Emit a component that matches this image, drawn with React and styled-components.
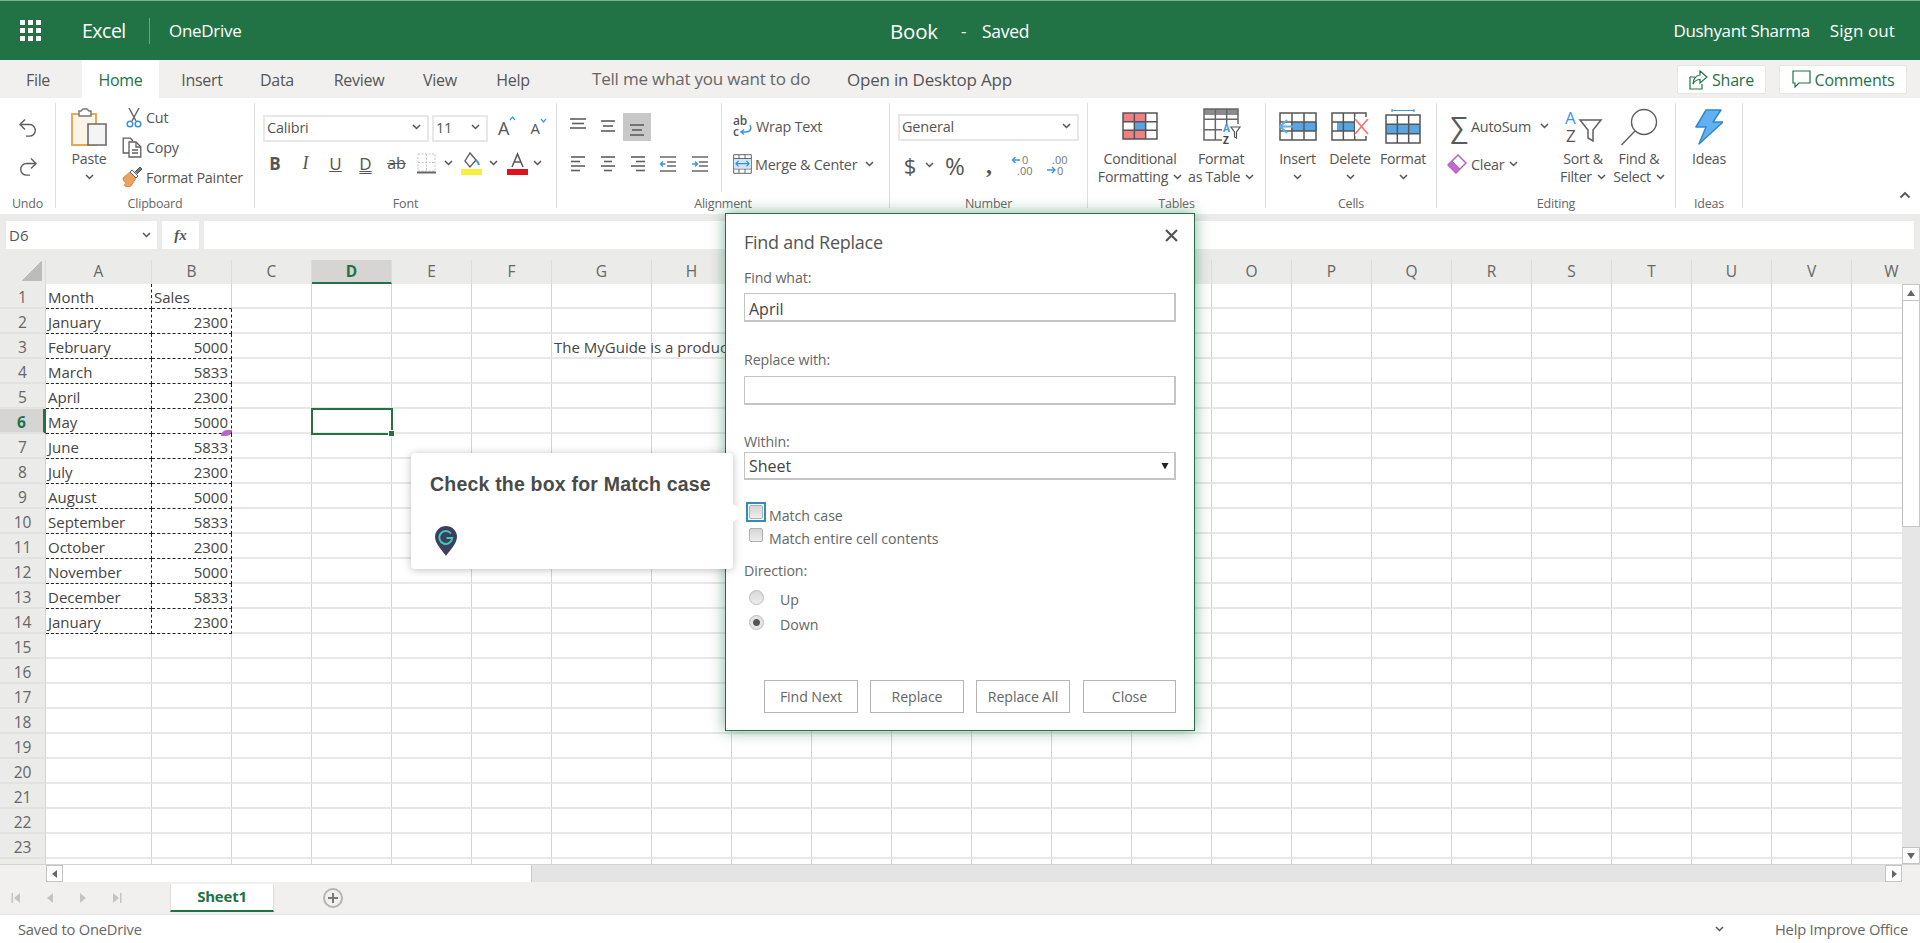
import React from "react";
import styled, { createGlobalStyle } from "styled-components";

const GlobalStyle = createGlobalStyle`
  html, body { margin: 0; padding: 0; width: 1920px; height: 943px; overflow: hidden; background: #fff; }
  body { font-family: "Open Sans", "Noto Sans", sans-serif; color: #555; }
  *, *::before, *::after { box-sizing: border-box; }
`;

const Page = styled.div`
  position: relative; width: 1920px; height: 943px; overflow: hidden;
  display: flex; flex-direction: column; background: #fff;
`;

/* top bar */
const TopBar = styled.header`
  flex: 0 0 60px; display: flex; align-items: center; background: #217346;
  border-top: 1px solid #7fb096; color: #fff; padding-left: 20px;
`;
const Waffle = styled.svg`flex: 0 0 21px; width: 21px; height: 21px; margin-right: 41px;`;
const AppName = styled.span`font-size: 19.5px; width: 67px; letter-spacing: -0.5px;`;
const ProductDivider = styled.span`width: 1px; height: 26px; background: rgba(255,255,255,.35); margin-right: 19px;`;
const OneDriveName = styled.span`font-size: 17px; width: 721px; letter-spacing: -0.3px;`;
const DocName = styled.span`font-size: 20.5px; width: 71px; letter-spacing: -0.2px;`;
const DocDash = styled.span`font-size: 17px; width: 21px;`;
const DocState = styled.span`font-size: 17.5px; letter-spacing: -0.3px;`;
const UserArea = styled.div`margin-left: auto; display: flex; gap: 20px; padding-right: 25px; font-size: 17px; letter-spacing: -0.35px;`;
const SignOut = styled.span`letter-spacing: 0.1px;`;

/* tabs */
const TabRow = styled.nav`
  flex: 0 0 38px; display: flex; align-items: stretch; background: #f1f0ef;
`;
const Tab = styled.div`
  flex: 0 0 ${p => p.$w}px; display: flex; align-items: center; justify-content: center; padding-top: 1px;
  margin-right: ${p => p.$mr || 0}px; font-size: 16px; letter-spacing: -0.3px;
  color: ${p => (p.$active ? "#217346" : "#555")};
  background: ${p => (p.$active ? "#fff" : "transparent")};
`;
const TellMe = styled.div`
  flex: 0 0 255px; display: flex; align-items: center; margin-left: 37px; padding-bottom: 2px;
  font-size: 17px; letter-spacing: -0.2px; color: #666;
`;
const DesktopLink = styled.div`
  display: flex; align-items: center; font-size: 17px; letter-spacing: -0.2px; color: #555; padding-top: 1px;
`;
const TabActions = styled.div`
  margin-left: auto; display: flex; gap: 13px; padding: 5px 13px 4px 0;
`;
const ActionButton = styled.div`
  width: ${p => p.$w}px; display: flex; align-items: center; justify-content: center; gap: 4px;
  background: #fff; border: 1px solid #e6e6e6; border-radius: 2px; color: #217346;
  font-size: 16px; letter-spacing: -0.2px; font-weight: 500;
`;

/* ribbon */
const Ribbon = styled.section`
  flex: 0 0 116px; display: flex; background: #fff; padding: 5px 0 6px; min-height: 0;
`;
const Group = styled.div`
  flex: 0 0 ${p => p.$w}px; display: flex; flex-direction: column; min-height: 0;
  border-right: 1px solid #dedede;
`;
const GroupBody = styled.div`
  flex: 1; display: flex; min-height: 0; padding-left: ${p => p.$pl || 0}px;
`;
const GroupLabel = styled.div`
  flex: 0 0 14px; min-height: 0; line-height: 20px; text-align: center; font-size: 12.5px; color: #666; letter-spacing: -0.2px;
`;
const Stack = styled.div`
  display: flex; flex-direction: column; flex: 0 0 ${p => p.$w ? p.$w + "px" : "auto"};
  padding-top: ${p => p.$pt || 0}px; gap: ${p => p.$gap || 0}px; margin-top: ${p => p.$mt || 0}px;
  align-items: ${p => p.$center ? "center" : "stretch"};
  border-right: ${p => p.$divider ? "1px solid #dedede" : "0"};
  height: ${p => p.$h ? p.$h + "px" : "auto"};
`;
const TallButton = styled.div`
  flex: 0 0 ${p => p.$w}px; display: flex; flex-direction: column; align-items: center;
  font-size: 14.2px; letter-spacing: -0.25px; color: #555; line-height: 18px; white-space: nowrap;
`;
const TallIcon = styled.div`
  height: 47px; flex-shrink: 0; display: flex; align-items: center; justify-content: center;
`;
const LabelLine = styled.div`
  height: 18px; flex-shrink: 0; display: flex; align-items: center; justify-content: center; gap: 5px;
`;
const CmdRow = styled.div`
  display: flex; flex-shrink: 0; align-items: center; height: ${p => p.$h || 30}px; padding-left: ${p => p.$pl || 0}px;
  font-size: 14.4px; letter-spacing: -0.25px; color: #555; white-space: nowrap;
  margin-top: ${p => p.$mt || 0}px;
`;
const CmdIcon = styled.div`
  flex: 0 0 ${p => p.$w}px; display: flex; align-items: center; justify-content: ${p => (p.$start ? "flex-start" : "center")};
`;
const CmdChevron = styled.span`margin-left: ${p => p.$ml || 8}px; display: inline-flex;`;
const SumGlyph = styled.span`font-size: 28px; line-height: 1; color: #5a5a5a;`;
const ToolRow = styled.div`
  display: flex; flex-shrink: 0; align-items: center; height: 28px; margin-top: ${p => p.$mt || 0}px;
  margin-left: ${p => p.$ml || 0}px;
`;
const ToolCell = styled.div`
  flex: 0 0 ${p => p.$w}px; height: 28px; display: flex; align-items: center; justify-content: center;
  margin-right: ${p => p.$mr || 0}px; color: #555;
  background: ${p => (p.$on ? "#c8c8c8" : "transparent")};
  font-size: ${p => p.$fs || 15}px; font-weight: ${p => p.$bold ? 700 : 400};
  font-style: ${p => p.$italic ? "italic" : "normal"};
  text-decoration: ${p => p.$line || "none"};
  font-family: ${p => p.$serif ? '"Liberation Serif", serif' : "inherit"};
`;
const Combo = styled.div`
  flex: 0 0 ${p => p.$w}px; height: 27px; display: flex; align-items: center; justify-content: space-between;
  border: 2px solid #e8e8e8; padding: 0 6px 2px 2px; margin-right: ${p => p.$mr || 0}px;
  font-size: 14.5px; letter-spacing: -0.2px; color: #555;
`;
const GrowA = styled.div`
  flex: 0 0 ${p => p.$w}px; margin-left: ${p => p.$ml || 0}px; font-size: ${p => p.$fs}px; color: #555;
  display: flex; align-items: flex-start; justify-content: center; gap: 0;
`;
const IconSvg = styled.svg`overflow: visible; display: block;`;
const CollapseButton = styled.div`margin-left: auto; align-self: flex-end; padding: 0 9px 4px 0;`;

/* formula bar */
const FormulaBar = styled.div`
  flex: 0 0 46px; display: flex; gap: 5px; padding: 7px 6px 11px; background: #ebebea;
`;
const NameBox = styled.div`
  flex: 0 0 151px; display: flex; align-items: center; justify-content: space-between;
  background: #fff; padding: 0 6px 0 3px; font-size: 15px; color: #555;
`;
const FxBox = styled.div`
  flex: 0 0 37px; background: #fff; display: flex; align-items: center; justify-content: center;
  font: italic 700 15px "Liberation Serif", serif; color: #555;
`;
const FormulaInput = styled.div`flex: 1; background: #fff;`;

/* sheet */
const SheetArea = styled.div`flex: 0 0 605px; min-height: 0; display: flex; border-bottom: 1px solid #d4d4d4;`;
const GridBox = styled.div`flex: 1; overflow: hidden; min-width: 0;`;
const HeaderRow = styled.div`display: flex; height: 24px; background: #ebebea;`;
const Corner = styled.div`
  flex: 0 0 46px; position: relative; border-right: 1px solid #dcdcdc;
  &::after {
    content: ""; position: absolute; right: 3px; top: 1px; width: 20px; height: 20px;
    background: linear-gradient(to bottom right, transparent 50%, #bcbcbc 50%);
  }
`;
const ColHead = styled.div`
  flex: 0 0 ${p => p.$w}px; text-align: center; line-height: 23px; font-size: 15.5px;
  color: ${p => (p.$active ? "#217346" : "#666")}; font-weight: ${p => (p.$active ? 700 : 400)};
  background: ${p => (p.$active ? "#d6d5d3" : "transparent")};
  border-right: 1px solid #dcdcdc;
  border-bottom: ${p => (p.$active ? "2px solid #217346" : "0")};
`;
const SheetRow = styled.div`display: flex; height: 25px;`;
const RowHead = styled.div`
  flex: 0 0 46px; text-align: center; line-height: 27px; font-size: 15.5px;
  color: ${p => (p.$active ? "#217346" : "#666")}; font-weight: ${p => (p.$active ? 700 : 400)};
  background: ${p => (p.$active ? "#d6d5d3" : "#ebebea")};
  border-right: ${p => (p.$active ? "3px solid #217346" : "1px solid #d4d4d4")};
  border-bottom: 2px solid #e2e2e2;
`;
const Cell = styled.div`
  flex: 0 0 ${p => p.$w}px; min-width: 0; height: 25px; position: relative; white-space: nowrap;
  line-height: 27px; font-size: 15px; color: #444;
  padding: 0 3px 0 2px; text-align: ${p => (p.$num ? "right" : "left")};
  border-right: ${p => (p.$dashR ? "1px dashed #222" : "1px solid #d4d4d4")};
  border-bottom: ${p => (p.$dashB ? "1px dashed #222" : "2px solid #e8e8e8")};
`;
const SelectionBox = styled.div`
  position: absolute; left: -1px; top: -1px; width: 82px; height: 27px;
  border: 2px solid #217346; z-index: 2;
  &::after {
    content: ""; position: absolute; right: -4px; bottom: -4px; width: 7px; height: 7px;
    background: #217346; border: 1px solid #fff;
  }
`;
const CommentMark = styled.div`
  position: absolute; right: -1px; bottom: -3px; width: 11px; height: 6px;
  background: #bb66c4; border-radius: 6px 0 6px 0; z-index: 2;
`;
const VScroll = styled.div`flex: 0 0 18px; display: flex; flex-direction: column; background: #e6e6e6;`;
const VHead = styled.div`flex: 0 0 24px; background: #ebebea;`;
const ScrollArrow = styled.div`
  flex: 0 0 ${p => p.$size || 17}px; display: flex; align-items: center; justify-content: center;
  background: #fff; border: 1px solid #c4c4c4;
`;
const VThumb = styled.div`flex: 0 0 226px; background: #fff; border-left: 1px solid #bdbdbd; border-right: 1px solid #c8c8c8; border-bottom: 1px solid #c8c8c8;`;
const VTrack = styled.div`flex: 1;`;
const HScrollRow = styled.div`flex: 0 0 17px; display: flex; background: #f1f0ef; padding-left: 46px; padding-right: 18px;`;
const HThumb = styled.div`flex: 0 0 469px; background: #fff; border-right: 1px solid #c8c8c8;`;
const HTrack = styled.div`flex: 1; background: #e4e4e4;`;
const SheetTabs = styled.div`flex: 0 0 33px; display: flex; background: #f1f0ef; border-bottom: 1px solid #e4e4e4;`;
const TabNav = styled.div`flex: 0 0 170px; display: flex; align-items: center; padding-left: 11px; gap: 23.5px;`;
const SheetTab = styled.div`
  flex: 0 0 104px; margin-top: 2px; height: 28px; background: #fff; text-align: center;
  border-bottom: 2px solid #217346; border-left: 1px solid #ddd; border-right: 1px solid #ddd;
  color: #217346; font-weight: 700; font-size: 15px; line-height: 25px; letter-spacing: -0.2px;
`;
const AddSheet = styled.div`
  margin: 6px 0 0 49px; width: 20px; height: 20px; border-radius: 50%; border: 2px solid #b4b4b4;
  display: flex; align-items: center; justify-content: center;
`;
const StatusBar = styled.footer`
  flex: 1; display: flex; align-items: center; padding: 0 12px 0 18px; font-size: 14.7px; color: #666; letter-spacing: -0.2px;
`;
const StatusRight = styled.div`margin-left: auto; display: flex; align-items: center; gap: 51px;`;

/* dialog */
const Dialog = styled.div`
  position: absolute; left: 725px; top: 213px; width: 470px; height: 518px;
  display: flex; flex-direction: column; padding: 0 18px 17px 18px;
  background: #fff; border: 1px solid #217346; z-index: 5;
  box-shadow: 0 0 14px rgba(33,115,70,.55);
`;
const DialogHeader = styled.div`
  flex: 0 0 40px; display: flex; justify-content: space-between; align-items: flex-start; padding-top: 16px;
`;
const DialogTitle = styled.div`font-size: 18px; line-height: 24px; color: #555; letter-spacing: -0.25px;`;
const CloseGlyph = styled.svg`width: 13px; height: 13px; margin: 0 -2px 0 0; position: relative; top: -1px;`;
const FieldLabel = styled.div`
  line-height: 20px; font-size: 14.2px; color: #666; margin-top: ${p => p.$mt}px; letter-spacing: -0.1px;
`;
const TextBox = styled.div`
  height: ${p => p.$h || 29}px; margin-top: ${p => p.$mt || 0}px; border-style: solid; border-width: 1px 2px 2px 1px;
  border-color: #c4c4c4; display: flex; align-items: center; padding: ${p => p.$pt ?? 2}px 4px 0;
  font-size: 16px; color: #444; justify-content: space-between;
`;
const CheckList = styled.div`margin-top: 24px;`;
const CheckRow = styled.div`
  display: flex; align-items: flex-start; height: 23px; font-size: 14.2px; line-height: 23px; color: #666; letter-spacing: -0.05px;
`;
const CheckBox = styled.span`
  position: relative; flex: 0 0 14px; height: 14px; margin: 1px 6px 0 5px; border-radius: 2px; border: 1px solid #b0b0b0;
  background: linear-gradient(#d4d4d4, #eeeeee);
  ${p => p.$focus && `&::after {
    content: ""; position: absolute; left: -4px; top: -4px; width: 20px; height: 20px;
    border: 2.5px solid #2b90b3;
  }`}
`;
const RadioList = styled.div`margin-top: 6px;`;
const RadioRow = styled.div`
  display: flex; align-items: flex-start; height: 25px; font-size: 14.2px; line-height: 25px; color: #666;
`;
const RadioDot = styled.span`
  flex: 0 0 15px; height: 15px; margin: 3px 16px 0 5px; border-radius: 50%; border: 1px solid #bbb;
  background: ${p => (p.$on
    ? "radial-gradient(circle, #555 0 3px, #e4e4e4 4px)"
    : "linear-gradient(#d8d8d8, #eeeeee)")};
`;
const ButtonRow = styled.div`margin-top: auto; display: flex; justify-content: flex-end; gap: 12px;`;
const DialogButton = styled.div`
  flex: 0 0 ${p => p.$w || 94}px; height: 33px; margin-left: ${p => p.$ml || 0}px; border: 1px solid #b4b4b4;
  display: flex; align-items: center; justify-content: center; font-size: 14.2px; color: #666; letter-spacing: -0.1px;
`;

/* tooltip */
const Tip = styled.div`
  position: absolute; left: 411px; top: 453px; width: 322px; height: 116px; z-index: 6;
  background: #fff; border-radius: 4px; padding: 20px 19px 0;
  box-shadow: 0 1px 8px rgba(0,0,0,.25);
  &::after {
    content: ""; position: absolute; right: -12px; top: 51px; width: 12px; height: 18px;
    background: #fff; clip-path: polygon(0 0, 100% 50%, 0 100%);
  }
`;
const TipText = styled.div`
  font: 700 19.5px/22px "Liberation Sans", Arial, sans-serif; color: #4a4a4a; letter-spacing: 0.2px; white-space: nowrap;
`;
const TipPin = styled.svg`display: block; width: 22px; height: 30px; margin: 31px 0 0 5px;`;

const stroke = "#5c5c5c";
const Chevron = ({ c = "#555" }) => (
  <svg width="9" height="6" viewBox="0 0 9 6"><path d="M1 1l3.5 3.5L8 1" fill="none" stroke={c} strokeWidth="1.5" /></svg>
);
const UndoIcon = () => (
  <svg width="20" height="20" viewBox="0 0 20 20" fill="none" stroke={stroke} strokeWidth="1.4"><path d="M7 1.5L2 6.5l5 5" /><path d="M2 6.5h9.5a5.8 5.8 0 0 1 0 11.6H8" /></svg>
);
const RedoIcon = () => (
  <svg width="20" height="20" viewBox="0 0 20 20" fill="none" stroke={stroke} strokeWidth="1.4"><path d="M13 1.5l5 5-5 5" /><path d="M18 6.5H8.5a5.8 5.8 0 0 0 0 11.6H12" /></svg>
);
const PasteIcon = () => (
  <svg width="36" height="38" viewBox="0 0 36 38" fill="none">
    <path d="M1 6h24v31H1z" fill="#fdf4e8" stroke="#e6a65c" strokeWidth="2" />
    <path d="M8 7V3h2l2-2h4l2 2h2v5H8z" fill="#fff" stroke="#777" strokeWidth="1.4" />
    <path d="M17 16h18v21H17z" fill="#f4f4f4" stroke="#6a6a6a" strokeWidth="1.6" />
  </svg>
);
const CutIcon = () => (
  <svg width="16" height="21" viewBox="0 0 16 21" fill="none">
    <path d="M3 1l7 13M13 1L6 14" stroke="#666" strokeWidth="1.5" />
    <circle cx="4" cy="17" r="2.8" stroke="#3d8fd6" strokeWidth="1.5" />
    <circle cx="12" cy="17" r="2.8" stroke="#3d8fd6" strokeWidth="1.5" />
  </svg>
);
const CopyIcon = () => (
  <svg width="20" height="21" viewBox="0 0 20 21" fill="none" stroke="#5f5f5f" strokeWidth="1.3">
    <path d="M7 16H1.2V1.2H8.5L11 4" />
    <path d="M7 5h7l4.8 4.8V20H7z" fill="#fff" />
    <path d="M14 5v5h4.8M10 13h6M10 16h6" />
  </svg>
);
const PainterIcon = () => (
  <svg width="21" height="22" viewBox="0 0 21 22" fill="none">
    <path d="M1 12l7-6 6 6-5 8c-3 1-6 1-7-1 1 0 2-1 2-2-1 0-3-3-3-5z" fill="#eaa35f" stroke="#d88a3f" />
    <path d="M8 6l6 6 2-2-6-6z" fill="#fff" stroke="#666" />
    <path d="M13 6l5-5 2 2-5 5" fill="#777" stroke="#555" />
  </svg>
);
const AlignIcon = ({ lines }) => (
  <svg width="18" height="18" viewBox="0 0 18 18" stroke="#5f5f5f" strokeWidth="1.6">
    {lines.map(([x1, x2, y], i) => <path key={i} d={`M${x1} ${y}H${x2}`} />)}
  </svg>
);
const IndentIcon = ({ flip }) => (
  <svg width="18" height="18" viewBox="0 0 18 18" fill="none" strokeWidth="1.5">
    <path d="M1 2h16M8 7h9M8 11h9M1 16h16" stroke="#6a6a6a" />
    <path d={flip ? "M1 9h5M4 6.5L6.5 9 4 11.5" : "M1.5 9h5M4 6.5L1.5 9 4 11.5"} stroke="#3f97dc" />
  </svg>
);
const BorderIcon = () => (
  <svg width="19" height="21" viewBox="0 0 19 21" fill="none">
    <path d="M1 1h17v17H1zM9.5 1v17M1 9.5h17" stroke="#c4c4c4" strokeDasharray="2 1.5" />
    <path d="M0 19.5h19" stroke="#666" strokeWidth="2" />
  </svg>
);
const FillIcon = () => (
  <svg width="21" height="23" viewBox="0 0 21 23" fill="none">
    <path d="M9 1l6 7-6 7-5-6z" stroke="#5f5f5f" strokeWidth="1.4" />
    <path d="M15 8c2 2 3 4 3 5" stroke="#3f97dc" strokeWidth="2" />
    <rect x="0" y="17" width="21" height="6" fill="#f7ef3a" />
  </svg>
);
const FontColorIcon = () => (
  <svg width="21" height="23" viewBox="0 0 21 23">
    <path d="M5 15L10.500 2 16 15M7 10h7" fill="none" stroke="#555" strokeWidth="1.500" />
    <rect y="17" width="21" height="6" fill="#e0101c" />
  </svg>
);
const WrapIcon = () => (
  <IconSvg width="20" height="22" viewBox="0 0 20 22" fill="none">
    <text x="0" y="10" fontSize="12" fontWeight="600" fontFamily="Open Sans" fill="#555">ab</text>
    <text x="0" y="21" fontSize="12" fontWeight="600" fontFamily="Open Sans" fill="#555">c</text>
    <path d="M17 10c2 4 0 7-4 7H8M11 14.5L8 17l3 2.5" stroke="#3f97dc" strokeWidth="1.6" />
  </IconSvg>
);
const MergeIcon = () => (
  <svg width="19" height="20" viewBox="0 0 19 20" fill="none">
    <path d="M.7.7h17.6v18.6H.7zM.7 4.5h17.6M.7 15h17.6M6 .7v3.8M12 .7v3.8M6 15v4M12 15v4" stroke="#666" />
    <rect x="1.2" y="5" width="16.6" height="9.5" fill="#cfe6f8" />
    <path d="M3 9.7h13M5.5 7L3 9.7l2.5 2.7M13.500 7L16 9.7l-2.500 2.700" stroke="#2f8fd8" strokeWidth="1.2" />
  </svg>
);
const DecimalIcon = ({ more }) => (
  <IconSvg width="22" height="23" viewBox="0 0 22 23" fill="none">
    <text x={more ? 11 : 6} y="10" fontSize="11" fontFamily="Open Sans" fill="#777">{more ? "0" : ".00"}</text>
    <text x={more ? 6 : 11} y="21" fontSize="11" fontFamily="Open Sans" fill="#777">{more ? ".00" : "0"}</text>
    <path d={more ? "M9 6H1.5M4.500 3L1.500 6l3 3" : "M1 16h8M6 13l3 3-3 3"} stroke="#3f97dc" strokeWidth="1.4" />
  </IconSvg>
);
const GridLines = ({ x = 1, y = 1, w = 34, h = 26, stroke: s = "#555" }) => (
  <g stroke={s} strokeWidth="1.5" fill="none">
    <rect x={x} y={y} width={w} height={h} />
    <path d={`M${x + w / 3} ${y}v${h}M${x + 2 * w / 3} ${y}v${h}M${x} ${y + h / 3}h${w}M${x} ${y + 2 * h / 3}h${w}`} />
  </g>
);
const CondIcon = () => (
  <svg width="36" height="29" viewBox="0 0 36 29">
    <rect x="1" y="1" width="22" height="9" fill="#f07f83" />
    <rect x="12" y="10" width="11" height="8" fill="#5aa3e0" />
    <rect x="1" y="18" width="22" height="9" fill="#f07f83" />
    <GridLines />
  </svg>
);
const TableIcon = () => (
  <IconSvg width="37" height="38" viewBox="0 0 37 38">
    <rect x="1" y="1" width="34" height="6" fill="#8b8b8b" />
    <GridLines x={1} y={1} w={34} h={31} stroke="#666" />
    <rect x="19" y="16" width="18" height="22" fill="#fff" />
    <text x="20" y="24" fontSize="10" fontWeight="700" fontFamily="Open Sans" fill="#3f97dc">A</text>
    <text x="20" y="36" fontSize="10" fontWeight="700" fontFamily="Open Sans" fill="#444">Z</text>
    <path d="M28 19h9l-3.500 5v6l-2-1v-5z" fill="none" stroke="#555" strokeWidth="1.2" />
  </IconSvg>
);
const InsertIcon = () => (
  <svg width="40" height="29" viewBox="0 0 40 29">
    <rect x="13" y="10" width="26" height="9" fill="#58a5e2" />
    <GridLines x={2} y={1} w={36} h={27} />
    <path d="M16 14.500H3M9 8l-7 6.500L9 21" fill="none" stroke="#5ab0ea" strokeWidth="2" />
  </svg>
);
const DeleteIcon = () => (
  <svg width="38" height="29" viewBox="0 0 38 29">
    <rect x="6" y="10" width="20" height="9" fill="#58a5e2" />
    <GridLines x={1} y={1} w={34} h={27} />
    <rect x="24" y="5" width="14" height="19" fill="#fff" />
    <path d="M24 7l13 15M37 7L24 22" fill="none" stroke="#ee7a7a" strokeWidth="1.8" />
  </svg>
);
const FormatIcon = () => (
  <svg width="36" height="35" viewBox="0 0 36 35">
    <path d="M7 1.500h22M7 0v3M29 0v3" stroke="#3f97dc" strokeWidth="1.2" />
    <rect x="1" y="15" width="34" height="10" fill="#58a5e2" />
    <GridLines x={1} y={6} w={34} h={28} />
  </svg>
);
const EraserIcon = () => (
  <svg width="20" height="20" viewBox="0 0 20 20">
    <path d="M1 11L11 1l8 8L9 19z" fill="#fff" stroke="#b562c5" strokeWidth="1.5" />
    <path d="M1 11l4-4 8 8-4 4z" fill="#bd6cca" stroke="#b562c5" />
  </svg>
);
const SortIcon = () => (
  <IconSvg width="37" height="35" viewBox="0 0 37 35">
    <text x="0" y="15" fontSize="17" fontFamily="Open Sans" fill="#3f97dc">A</text>
    <text x="1" y="33" fontSize="17" fontFamily="Open Sans" fill="#555">Z</text>
    <path d="M15 11h21l-8 10v11l-5-3v-8z" fill="none" stroke="#5f5f5f" strokeWidth="1.5" />
  </IconSvg>
);
const FindIcon = () => (
  <svg width="38" height="38" viewBox="0 0 38 38" fill="none" stroke="#5f5f5f" strokeWidth="1.4">
    <circle cx="24" cy="14" r="12.5" />
    <path d="M15 23L1.500 37" />
  </svg>
);
const BoltIcon = () => (
  <svg width="28" height="36" viewBox="0 0 28 36">
    <path d="M11 1h15l-8 12h10L4 35l7-17H1z" fill="#62b1ee" stroke="#2f87cf" strokeWidth="1.5" strokeLinejoin="round" />
  </svg>
);
const ShareIcon = () => (
  <svg width="19" height="20" viewBox="0 0 19 20" fill="none" stroke="#217346" strokeWidth="1.2">
    <path d="M1 7h5M1 7v12h12v-5" />
    <path d="M11 1l7 6-7 6V9.500C7 9.500 5 12 4 14c0-5 3-8.500 7-9z" />
  </svg>
);
const CommentIcon = () => (
  <svg width="19" height="20" viewBox="0 0 19 20" fill="none" stroke="#217346" strokeWidth="1.2">
    <path d="M1 1h17v12H7l-4 4v-4H1z" />
  </svg>
);
const ArrowGlyph = ({ d, c = "#666" }) => (
  <svg width="10" height="10" viewBox="0 0 10 10"><path d={d} fill={c} /></svg>
);
const NavGlyph = ({ d, bar }) => (
  <svg width="10" height="12" viewBox="0 0 10 12">
    <path d={d} fill="#c4c4c4" />
    {bar !== undefined && <rect x={bar} y="1" width="1.5" height="10" fill="#c4c4c4" />}
  </svg>
);

const columns = [
  ["A", 106], ["B", 80], ["C", 80], ["D", 80], ["E", 80], ["F", 80], ["G", 100], ["H", 80],
  ["I", 80], ["J", 80], ["K", 80], ["L", 80], ["M", 80], ["N", 80], ["O", 80], ["P", 80],
  ["Q", 80], ["R", 80], ["S", 80], ["T", 80], ["U", 80], ["V", 80], ["W", 80],
];
const data = [
  ["Month", "Sales"], ["January", "2300"], ["February", "5000"], ["March", "5833"], ["April", "2300"],
  ["May", "5000"], ["June", "5833"], ["July", "2300"], ["August", "5000"], ["September", "5833"],
  ["October", "2300"], ["November", "5000"], ["December", "5833"], ["January", "2300"],
];
const rows = Array.from({ length: 24 }, (_, i) => i + 1);

function cellContent(r, c) {
  if (c === "A" && data[r - 1]) return data[r - 1][0];
  if (c === "B" && data[r - 1]) return data[r - 1][1];
  if (c === "G" && r === 3) return "The MyGuide is a product";
  return null;
}

function SheetGrid() {
  return (
    <GridBox>
      <HeaderRow>
        <Corner />
        {columns.map(([n, w]) => <ColHead key={n} $w={w} $active={n === "D"}>{n}</ColHead>)}
      </HeaderRow>
      {rows.map(r => (
        <SheetRow key={r}>
          <RowHead $active={r === 6}>{r <= 23 ? r : ""}</RowHead>
          {columns.map(([n, w]) => (
            <Cell
              key={n}
              $w={w}
              $num={n === "B" && r > 1}
              $dashR={(n === "A" && r <= 14) || (n === "B" && r >= 2 && r <= 14)}
              $dashB={(n === "A" || n === "B") && r <= 14}
            >
              {cellContent(r, n)}
              {n === "D" && r === 6 && <SelectionBox />}
              {n === "B" && r === 6 && <CommentMark />}
            </Cell>
          ))}
        </SheetRow>
      ))}
    </GridBox>
  );
}

const tall = (w, icon, l1) => (
  <TallButton $w={w}>
    <TallIcon>{icon}</TallIcon>
    <LabelLine>{l1}</LabelLine>
    <LabelLine><Chevron /></LabelLine>
  </TallButton>
);

export default function App() {
  return (
    <Page>
      <GlobalStyle />
      <TopBar>
        <Waffle viewBox="0 0 21 21" fill="#fff">
          {[0, 8, 16].flatMap(y => [0, 8, 16].map(x => <rect key={x + "-" + y} x={x} y={y} width="5" height="5" />))}
        </Waffle>
        <AppName>Excel</AppName>
        <ProductDivider />
        <OneDriveName>OneDrive</OneDriveName>
        <DocName>Book</DocName>
        <DocDash>-</DocDash>
        <DocState>Saved</DocState>
        <UserArea><span>Dushyant Sharma</span><SignOut>Sign out</SignOut></UserArea>
      </TopBar>

      <TabRow>
        <Tab $w={76} $mr={6}>File</Tab>
        <Tab $w={77} $active>Home</Tab>
        <Tab $w={86}>Insert</Tab>
        <Tab $w={64}>Data</Tab>
        <Tab $w={100}>Review</Tab>
        <Tab $w={62}>View</Tab>
        <Tab $w={84}>Help</Tab>
        <TellMe>Tell me what you want to do</TellMe>
        <DesktopLink>Open in Desktop App</DesktopLink>
        <TabActions>
          <ActionButton $w={89}><ShareIcon />Share</ActionButton>
          <ActionButton $w={128}><CommentIcon />Comments</ActionButton>
        </TabActions>
      </TabRow>

      <Ribbon>
        <Group $w={56}>
          <GroupBody>
            <Stack $w={55} $pt={15} $gap={19} $center>
              <UndoIcon /><RedoIcon />
            </Stack>
          </GroupBody>
          <GroupLabel>Undo</GroupLabel>
        </Group>

        <Group $w={199}>
          <GroupBody>
            <TallButton $w={66}>
              <TallIcon><PasteIcon /></TallIcon>
              <LabelLine>Paste</LabelLine>
              <LabelLine><Chevron /></LabelLine>
            </TallButton>
            <Stack $mt={-1}>
              <CmdRow><CmdIcon $w={24}><CutIcon /></CmdIcon>Cut</CmdRow>
              <CmdRow><CmdIcon $w={24} $start><CopyIcon /></CmdIcon>Copy</CmdRow>
              <CmdRow><CmdIcon $w={24} $start><PainterIcon /></CmdIcon>Format Painter</CmdRow>
            </Stack>
          </GroupBody>
          <GroupLabel>Clipboard</GroupLabel>
        </Group>

        <Group $w={302}>
          <GroupBody $pl={8}>
            <Stack $pt={11}>
              <ToolRow>
                <Combo $w={166} $mr={3}>Calibri<Chevron /></Combo>
                <Combo $w={56}>11<Chevron /></Combo>
                <GrowA $w={16} $ml={10} $fs={18}>A<svg width="7" height="5" viewBox="0 0 7 5"><path d="M1 4l2.500-3L6 4" fill="none" stroke="#3f97dc" strokeWidth="1.2" /></svg></GrowA>
                <GrowA $w={16} $ml={14} $fs={15}>A<svg width="7" height="5" viewBox="0 0 7 5"><path d="M1 1l2.500 3L6 1" fill="none" stroke="#3f97dc" strokeWidth="1.2" /></svg></GrowA>
              </ToolRow>
              <ToolRow $mt={7} $ml={-3}>
                <ToolCell $w={30} $bold $fs={17}>B</ToolCell>
                <ToolCell $w={31} $italic $fs={18} $serif>I</ToolCell>
                <ToolCell $w={29} $fs={17} $line="underline">U</ToolCell>
                <ToolCell $w={31} $fs={17} $line="underline double">D</ToolCell>
                <ToolCell $w={31} $fs={16} $line="line-through">ab</ToolCell>
                <ToolCell $w={28}><BorderIcon /></ToolCell>
                <ToolCell $w={16}><Chevron /></ToolCell>
                <ToolCell $w={30}><FillIcon /></ToolCell>
                <ToolCell $w={14}><Chevron /></ToolCell>
                <ToolCell $w={2} />
                <ToolCell $w={30}><FontColorIcon /></ToolCell>
                <ToolCell $w={10}><Chevron /></ToolCell>
              </ToolRow>
            </Stack>
          </GroupBody>
          <GroupLabel>Font</GroupLabel>
        </Group>

        <Group $w={333}>
          <GroupBody>
            <Stack $w={165} $pt={10} $h={89} $divider>
              <ToolRow $ml={6}>
                <ToolCell $w={30}><AlignIcon lines={[[1, 17, 1], [3, 15, 5.500], [1, 17, 10]]} /></ToolCell>
                <ToolCell $w={30}><AlignIcon lines={[[2, 16, 3], [4, 14, 8], [2, 16, 13]]} /></ToolCell>
                <ToolCell $w={28} $on $mr={2}><AlignIcon lines={[[2, 16, 7], [4, 14, 12], [2, 16, 17]]} /></ToolCell>
              </ToolRow>
              <ToolRow $mt={9} $ml={6}>
                <ToolCell $w={30}><AlignIcon lines={[[2, 16, 2], [2, 11, 6.500], [2, 16, 11], [2, 11, 15.500]]} /></ToolCell>
                <ToolCell $w={30}><AlignIcon lines={[[2, 16, 2], [5, 13, 6.500], [2, 16, 11], [5, 13, 15.500]]} /></ToolCell>
                <ToolCell $w={30}><AlignIcon lines={[[2, 16, 2], [7, 16, 6.500], [2, 16, 11], [7, 16, 15.500]]} /></ToolCell>
                <ToolCell $w={30} $mr={1}><IndentIcon /></ToolCell>
                <ToolCell $w={31}><IndentIcon flip /></ToolCell>
              </ToolRow>
            </Stack>
            <Stack>
              <CmdRow $h={38} $pl={8} $mt={4}><CmdIcon $w={26}><WrapIcon /></CmdIcon>Wrap Text</CmdRow>
              <CmdRow $h={38} $pl={8}><CmdIcon $w={25}><MergeIcon /></CmdIcon>Merge &amp; Center<CmdChevron><Chevron /></CmdChevron></CmdRow>
            </Stack>
          </GroupBody>
          <GroupLabel>Alignment</GroupLabel>
        </Group>

        <Group $w={198}>
          <GroupBody $pl={8}>
            <Stack $pt={10}>
              <ToolRow><Combo $w={181}>General<Chevron /></Combo></ToolRow>
              <ToolRow $mt={10}>
                <ToolCell $w={24} $fs={22}>$</ToolCell>
                <ToolCell $w={14}><Chevron /></ToolCell>
                <ToolCell $w={38} $fs={24}>%</ToolCell>
                <ToolCell $w={30} $fs={24} $bold $serif>,</ToolCell>
                <ToolCell $w={36}><DecimalIcon more /></ToolCell>
                <ToolCell $w={34}><DecimalIcon /></ToolCell>
              </ToolRow>
            </Stack>
          </GroupBody>
          <GroupLabel>Number</GroupLabel>
        </Group>

        <Group $w={178}>
          <GroupBody $pl={4}>
            <TallButton $w={96}>
              <TallIcon><CondIcon /></TallIcon>
              <LabelLine>Conditional</LabelLine>
              <LabelLine>Formatting<Chevron /></LabelLine>
            </TallButton>
            <TallButton $w={66}>
              <TallIcon><TableIcon /></TallIcon>
              <LabelLine>Format</LabelLine>
              <LabelLine>as Table<Chevron /></LabelLine>
            </TallButton>
          </GroupBody>
          <GroupLabel>Tables</GroupLabel>
        </Group>

        <Group $w={171}>
          <GroupBody $pl={5}>
            {tall(53, <InsertIcon />, "Insert")}
            {tall(52, <DeleteIcon />, "Delete")}
            {tall(54, <FormatIcon />, "Format")}
          </GroupBody>
          <GroupLabel>Cells</GroupLabel>
        </Group>

        <Group $w={239}>
          <GroupBody>
            <Stack $w={118}>
              <CmdRow $h={38} $pl={10} $mt={4}><CmdIcon $w={24}><SumGlyph>∑</SumGlyph></CmdIcon>AutoSum<CmdChevron $ml={9}><Chevron /></CmdChevron></CmdRow>
              <CmdRow $h={38} $pl={10}><CmdIcon $w={24} $start><EraserIcon /></CmdIcon>Clear<CmdChevron $ml={5}><Chevron /></CmdChevron></CmdRow>
            </Stack>
            <TallButton $w={56}>
              <TallIcon><SortIcon /></TallIcon>
              <LabelLine>Sort &amp;</LabelLine>
              <LabelLine>Filter<Chevron /></LabelLine>
            </TallButton>
            <TallButton $w={56}>
              <TallIcon><FindIcon /></TallIcon>
              <LabelLine>Find &amp;</LabelLine>
              <LabelLine>Select<Chevron /></LabelLine>
            </TallButton>
          </GroupBody>
          <GroupLabel>Editing</GroupLabel>
        </Group>

        <Group $w={67}>
          <GroupBody>
            <TallButton $w={66}>
              <TallIcon><BoltIcon /></TallIcon>
              <LabelLine>Ideas</LabelLine>
            </TallButton>
          </GroupBody>
          <GroupLabel>Ideas</GroupLabel>
        </Group>

        <CollapseButton>
          <svg width="12" height="8" viewBox="0 0 12 8"><path d="M1.500 6.500L6 2l4.500 4.500" fill="none" stroke="#555" strokeWidth="1.800" /></svg>
        </CollapseButton>
      </Ribbon>

      <FormulaBar>
        <NameBox>D6<Chevron /></NameBox>
        <FxBox>fx</FxBox>
        <FormulaInput />
      </FormulaBar>

      <SheetArea>
        <SheetGrid />
        <VScroll>
          <VHead />
          <ScrollArrow><ArrowGlyph d="M5 2L9 8H1z" /></ScrollArrow>
          <VThumb />
          <VTrack />
          <ScrollArrow><ArrowGlyph d="M1 2h8L5 8z" /></ScrollArrow>
        </VScroll>
      </SheetArea>
      <HScrollRow>
        <ScrollArrow><ArrowGlyph d="M7 1v8L2 5z" /></ScrollArrow>
        <HThumb />
        <HTrack />
        <ScrollArrow><ArrowGlyph d="M3 1v8l5-4z" /></ScrollArrow>
      </HScrollRow>
      <SheetTabs>
        <TabNav>
          <NavGlyph d="M9 1v10L3 6z" bar={0.500} />
          <NavGlyph d="M8 1v10L2 6z" />
          <NavGlyph d="M2 1v10l6-5z" />
          <NavGlyph d="M1 1v10l6-5z" bar={8} />
        </TabNav>
        <SheetTab>Sheet1</SheetTab>
        <AddSheet><svg width="12" height="12" viewBox="0 0 12 12"><path d="M6 1v10M1 6h10" stroke="#777" strokeWidth="2" /></svg></AddSheet>
      </SheetTabs>
      <StatusBar>
        Saved to OneDrive
        <StatusRight><Chevron /><span>Help Improve Office</span></StatusRight>
      </StatusBar>

      <Dialog>
        <DialogHeader>
          <DialogTitle>Find and Replace</DialogTitle>
          <CloseGlyph viewBox="0 0 13 13"><path d="M1 1l11 11M12 1L1 12" stroke="#555" strokeWidth="2.200" /></CloseGlyph>
        </DialogHeader>
        <FieldLabel $mt={14}>Find what:</FieldLabel>
        <TextBox $mt={5} $pt={3}>April</TextBox>
        <FieldLabel $mt={28}>Replace with:</FieldLabel>
        <TextBox $mt={6} />
        <FieldLabel $mt={27}>Within:</FieldLabel>
        <TextBox $h={28} $pt={1}>Sheet<ArrowGlyph d="M1.500 2h7L5 8.500z" c="#222" /></TextBox>
        <CheckList>
          <CheckRow><CheckBox $focus />Match case</CheckRow>
          <CheckRow><CheckBox />Match entire cell contents</CheckRow>
        </CheckList>
        <FieldLabel $mt={11}>Direction:</FieldLabel>
        <RadioList>
          <RadioRow><RadioDot />Up</RadioRow>
          <RadioRow><RadioDot $on />Down</RadioRow>
        </RadioList>
        <ButtonRow>
          <DialogButton>Find Next</DialogButton>
          <DialogButton>Replace</DialogButton>
          <DialogButton>Replace All</DialogButton>
          <DialogButton $w={93} $ml={1}>Close</DialogButton>
        </ButtonRow>
      </Dialog>

      <Tip>
        <TipText>Check the box for Match case</TipText>
        <TipPin viewBox="0 0 22 30">
          <path d="M11 30C8 25 0 18 0 11a11 11 0 0 1 22 0c0 7-8 14-11 19z" fill="#3d3f5f" />
          <path d="M16 7.500A6.500 6.500 0 1 0 17.300 12H11.500" fill="none" stroke="#3fc9b4" strokeWidth="2" />
        </TipPin>
      </Tip>
    </Page>
  );
}
